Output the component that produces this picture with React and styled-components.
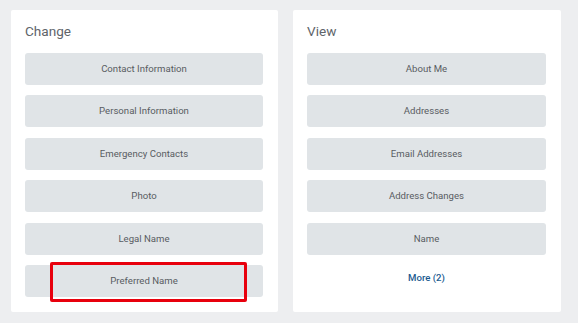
import React from 'react';
import styled, { createGlobalStyle } from 'styled-components';

const Global = createGlobalStyle`
  html, body {
    margin: 0;
    padding: 0;
    background: #edeef0;
    font-family: Roboto, "Liberation Sans", Arial, sans-serif;
  }
`;

const Page = styled.div`
  width: 578px;
  height: 323px;
  box-sizing: border-box;
  padding: 10px 17px 11px 11px;
  display: grid;
  grid-template-columns: 267px 268px;
  column-gap: 15px;
`;

const Card = styled.div`
  background: #fff;
  border-radius: 2px;
  padding: 13px 15px 0 14px;
  box-sizing: border-box;
  display: flex;
  flex-direction: column;
`;

const Title = styled.h2`
  margin: 0 0 13px;
  font-size: 13.6px;
  font-weight: 400;
  color: #60646a;
  line-height: 17px;
`;

const List = styled.div`
  display: flex;
  flex-direction: column;
  gap: 10.4px;
`;

const Wrap = styled.div`
  position: relative;
`;

const Button = styled.div`
  height: 32px;
  padding-bottom: 1px;
  box-sizing: border-box;
  background: #e0e4e7;
  border-radius: 3px;
  display: flex;
  align-items: center;
  justify-content: center;
  font-size: 9.6px;
  color: #585c62;
`;

const Highlight = styled.div`
  position: absolute;
  left: 25px;
  right: 16px;
  top: -3px;
  bottom: -5px;
  border: 3px solid #e8000d;
  border-radius: 2px;
`;

const More = styled.div`
  margin-top: 17px;
  text-align: center;
  font-size: 9.6px;
  font-weight: 500;
  color: #1b5a8f;
`;

const change = ['Contact Information', 'Personal Information', 'Emergency Contacts', 'Photo', 'Legal Name', 'Preferred Name'];
const view = ['About Me', 'Addresses', 'Email Addresses', 'Address Changes', 'Name'];

export default function App() {
  return (
    <>
      <Global />
      <Page>
        <Card>
          <Title>Change</Title>
          <List>
            {change.map((t) => (
              <Wrap key={t}>
                <Button>{t}</Button>
                {t === 'Preferred Name' && <Highlight />}
              </Wrap>
            ))}
          </List>
        </Card>
        <Card>
          <Title>View</Title>
          <List>
            {view.map((t) => (
              <Button key={t}>{t}</Button>
            ))}
          </List>
          <More>More (2)</More>
        </Card>
      </Page>
    </>
  );
}
